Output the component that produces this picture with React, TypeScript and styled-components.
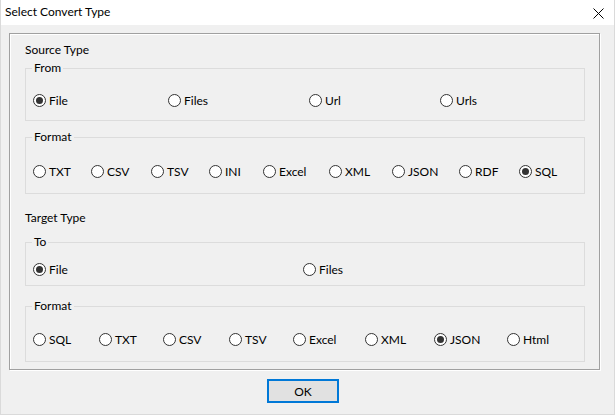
import React, { useState } from 'react'
import styled, { createGlobalStyle } from 'styled-components'

const GlobalStyle = createGlobalStyle`
  html, body {
    margin: 0;
    padding: 0;
    background: #f0f0f0;
  }
  body {
    font-family: Lato, 'Noto Sans', sans-serif;
    font-size: 12px;
    color: #000;
  }
`

type Group = {
  legend: string
  name: string
  options: string[]
  widths: number[]
  height: number
  rowTop: number
  gap: number
  initial: string
}

const sourceGroups: Group[] = [
  {
    legend: 'From',
    name: 'src-from',
    options: ['File', 'Files', 'Url', 'Urls'],
    widths: [135, 141, 131],
    height: 53,
    rowTop: 23,
    gap: 10,
    initial: 'File',
  },
  {
    legend: 'Format',
    name: 'src-format',
    options: ['TXT', 'CSV', 'TSV', 'INI', 'Excel', 'XML', 'JSON', 'RDF', 'SQL'],
    widths: [58, 60, 58, 54, 66, 63, 67, 60],
    height: 57,
    rowTop: 25,
    gap: 16,
    initial: 'SQL',
  },
]

const targetGroups: Group[] = [
  {
    legend: 'To',
    name: 'dst-to',
    options: ['File', 'Files'],
    widths: [270],
    height: 44,
    rowTop: 18,
    gap: 16,
    initial: 'File',
  },
  {
    legend: 'Format',
    name: 'dst-format',
    options: ['SQL', 'TXT', 'CSV', 'TSV', 'Excel', 'XML', 'JSON', 'Html'],
    widths: [66, 64, 66, 64, 72, 69, 73],
    height: 56,
    rowTop: 24,
    gap: 20,
    initial: 'JSON',
  },
]

function RadioGroup({ group }: { group: Group }) {
  const [value, setValue] = useState(group.initial)
  const columns = group.widths.map((w) => `${w}px`).join(' ') + ' auto'

  return (
    <GroupBox $height={group.height} $rowTop={group.rowTop} $gap={group.gap}>
      <Legend>{group.legend}</Legend>
      <RadioRow $columns={columns}>
        {group.options.map((opt) => (
          <RadioLabel key={opt}>
            <RadioInput
              type="radio"
              name={group.name}
              checked={value === opt}
              onChange={() => setValue(opt)}
            />
            <RadioCircle $checked={value === opt} />
            {opt}
          </RadioLabel>
        ))}
      </RadioRow>
    </GroupBox>
  )
}

export default function App() {
  return (
    <>
      <GlobalStyle />
      <Window>
        <TitleBar>
          <Title>Select Convert Type</Title>
          <CloseButton aria-label="Close">
            <svg width="11" height="11" viewBox="0 0 11 11">
              <path d="M0.5 0.5 L10.5 10.5 M10.5 0.5 L0.5 10.5" stroke="#000" strokeWidth="1" fill="none" />
            </svg>
          </CloseButton>
        </TitleBar>
        <Body>
          <Panel>
            <SectionLabel>Source Type</SectionLabel>
            {sourceGroups.map((g) => (
              <RadioGroup key={g.name} group={g} />
            ))}
            <SectionLabel $gap={16}>Target Type</SectionLabel>
            {targetGroups.map((g) => (
              <RadioGroup key={g.name} group={g} />
            ))}
          </Panel>
          <Footer>
            <OkButton>OK</OkButton>
          </Footer>
        </Body>
      </Window>
    </>
  )
}

const Window = styled.div`
  width: 615px;
  height: 415px;
  box-sizing: border-box;
  display: flex;
  flex-direction: column;
  background: #f0f0f0;
  border: 1px solid #dadada;
  border-top: none;
`

const TitleBar = styled.div`
  height: 25px;
  flex: none;
  display: flex;
  align-items: center;
  justify-content: space-between;
  background: #fff;
  padding: 0 10px 0 4px;
`

const Title = styled.div`
  font-size: 12px;
  line-height: 16px;
  margin-top: -1px;
`

const CloseButton = styled.div`
  width: 11px;
  height: 11px;
  display: flex;
  margin-top: 1px;
`

const Body = styled.div`
  flex: 1;
  display: flex;
  flex-direction: column;
  padding: 8px 14px 0 8px;
`

const Panel = styled.div`
  display: flex;
  flex-direction: column;
  border: 1px solid #a0a0a0;
  box-shadow: 1px 1px 0 #fff, inset 1px 1px 0 #fff;
  padding: 8px 14px 7px 15px;
`

const SectionLabel = styled.div<{ $gap?: number }>`
  line-height: 16px;
  margin-top: ${({ $gap }) => $gap ?? 0}px;
`

const GroupBox = styled.div<{ $height: number; $rowTop: number; $gap: number }>`
  position: relative;
  box-sizing: border-box;
  height: ${({ $height }) => $height}px;
  margin-top: ${({ $gap }) => $gap}px;
  border: 1px solid #dcdcdc;
  padding: ${({ $rowTop }) => $rowTop}px 0 0 7px;
`

const Legend = styled.div`
  position: absolute;
  top: -9px;
  left: 6px;
  padding: 0 2px;
  line-height: 16px;
  background: #f0f0f0;
`

const RadioRow = styled.div<{ $columns: string }>`
  display: grid;
  grid-template-columns: ${({ $columns }) => $columns};
  align-items: center;
  height: 17px;
`

const RadioLabel = styled.label`
  display: flex;
  align-items: center;
  gap: 3px;
  line-height: 16px;
  white-space: nowrap;
  cursor: default;
`

const RadioInput = styled.input`
  position: absolute;
  opacity: 0;
  width: 0;
  height: 0;
  margin: 0;
`

const RadioCircle = styled.span<{ $checked: boolean }>`
  width: 13px;
  height: 13px;
  box-sizing: border-box;
  flex: none;
  border-radius: 50%;
  border: 1px solid #333;
  background: #fff;
  display: flex;
  align-items: center;
  justify-content: center;

  &::after {
    content: '';
    width: 7px;
    height: 7px;
    border-radius: 50%;
    background: #333;
    display: ${({ $checked }) => ($checked ? 'block' : 'none')};
  }
`

const Footer = styled.div`
  display: flex;
  justify-content: center;
  padding: 9px 3px 0 0;
`

const OkButton = styled.button`
  width: 72px;
  height: 24px;
  box-sizing: border-box;
  border: 2px solid #0078d7;
  background: #e1e1e1;
  font-family: inherit;
  font-size: 12px;
  color: #000;
  padding: 0;
`
